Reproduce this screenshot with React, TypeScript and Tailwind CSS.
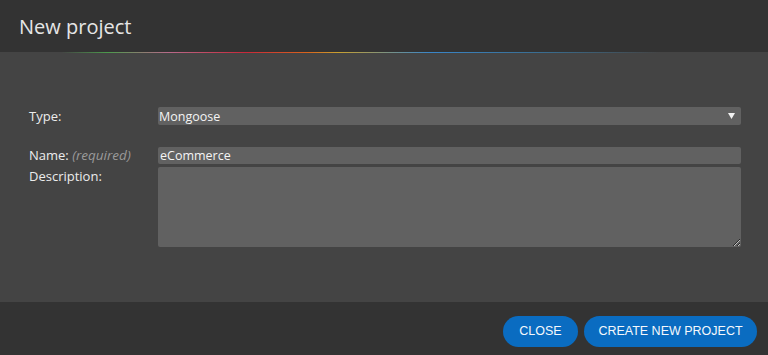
export default function App() {
  return (
    <div className="w-[768px] h-[355px] flex flex-col bg-[#444] font-['Open_Sans',sans-serif] overflow-hidden">
      <div className="h-[52px] bg-[#333] flex items-center px-[19px]">
        <h1 className="text-[20px] text-[#e6e6e6] leading-none mt-[1px]">New project</h1>
      </div>
      <div className="h-px bg-[linear-gradient(to_right,transparent_8%,#4c9a4c_14%,#b86a8a_22%,#c8283a_32%,#d8641c_40%,#c8a030_44%,#3a86c8_56%,#3a6a8a_72%,transparent_86%)]" />

      <div className="flex-1 pt-[54px] pl-[29px] pr-[27px] text-[13px] leading-[17px] text-[#ececec]">
        <div className="flex items-center">
          <label className="w-[129px]">Type:</label>
          <div className="flex-1 h-[18px] bg-[#616161] rounded-[2px] flex items-center justify-between pl-[1px] pr-[6px] text-[12.5px]">
            <span className="text-[#f4f4f4]">Mongoose</span>
            <svg width="7" height="6" viewBox="0 0 7 6">
              <path d="M0 0 L7 0 L3.5 6 Z" fill="#f2f2f2" />
            </svg>
          </div>
        </div>

        <div className="flex items-center mt-[22px]">
          <label className="w-[129px]">
            Name: <span className="italic text-[#9a9a9a] text-[13.5px]">(required)</span>
          </label>
          <div className="flex-1 h-[17px] bg-[#616161] rounded-[2px] flex items-center pl-[2px] text-[12.5px]">
            <span className="text-[#f4f4f4]">eCommerce</span>
          </div>
        </div>

        <div className="flex items-start mt-[3px]">
          <label className="w-[129px] leading-[18px]">Description:</label>
          <textarea className="flex-1 h-[80px] bg-[#616161] rounded-[2px] outline-none text-[#f0f0f0] block" />
        </div>
      </div>

      <div className="h-[53px] bg-[#333] flex items-start justify-end gap-[6px] pt-[14px] pr-[11px] font-['Liberation_Sans',Arial,sans-serif]">
        <button className="w-[75px] h-[31px] rounded-full bg-[#0a6cc1] text-[#f4f8fc] text-[12.5px]">CLOSE</button>
        <button className="w-[173px] h-[31px] rounded-full bg-[#0a6cc1] text-[#f4f8fc] text-[12.5px]">CREATE NEW PROJECT</button>
      </div>
    </div>
  )
}
